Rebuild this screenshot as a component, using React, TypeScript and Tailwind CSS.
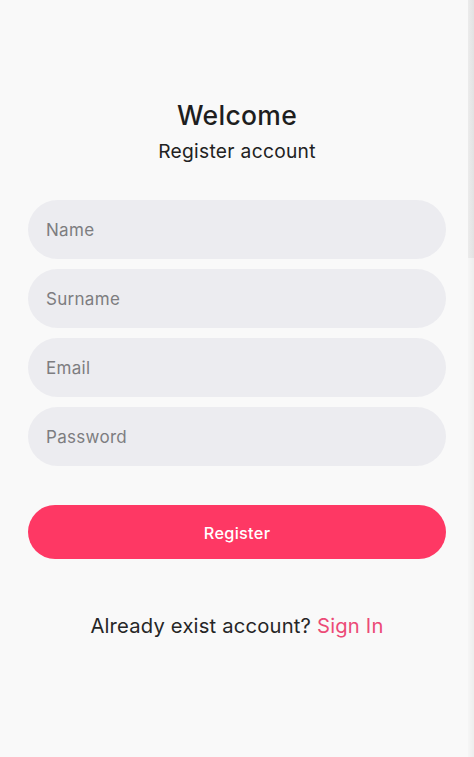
import React from "react";

export default function App() {
  const font = { fontFamily: "Inter, 'DejaVu Sans', sans-serif" };
  return (
    <div className="relative w-[474px] h-[757px] overflow-hidden bg-[#f9f9f9]" style={font}>
      <div className="flex flex-col items-center px-[28px] pt-[99px]">
        <h1 className="text-[26.5px] leading-[32px] font-medium text-[#1e1e1e] tracking-[0.3px]">Welcome</h1>
        <p className="mt-[8px] text-[19.2px] leading-[24px] text-[#222] tracking-[0.3px]">Register account</p>
        <div className="mt-[37px] flex w-full flex-col gap-[10px]">
          {["Name", "Surname", "Email", "Password"].map((p) => (
            <input
              key={p}
              placeholder={p}
              className="h-[59px] w-full rounded-full bg-[#ececf0] px-[18px] text-[17px] text-[#333] placeholder:text-[#7d7d80] outline-none tracking-[0.3px]"
              style={font}
            />
          ))}
        </div>
        <button
          className="mt-[39px] h-[54px] w-full rounded-full bg-[#fe3864] pt-[2px] text-[16.3px] font-medium text-white tracking-[0.3px]"
          style={font}
        >
          Register
        </button>
        <p className="mt-[53px] text-[20.2px] leading-[28px] text-[#262626] tracking-[0.2px]">
          Already exist account? <span className="text-[#ec4a76]">Sign In</span>
        </p>
      </div>
      <div className="absolute right-0 top-0 h-full w-[6px] bg-gradient-to-r from-[#f6f6f6] to-[#ededed]">
        <div className="h-[258px] w-full bg-gradient-to-r from-[#ececec] to-[#e2e2e2]" />
      </div>
    </div>
  );
}
